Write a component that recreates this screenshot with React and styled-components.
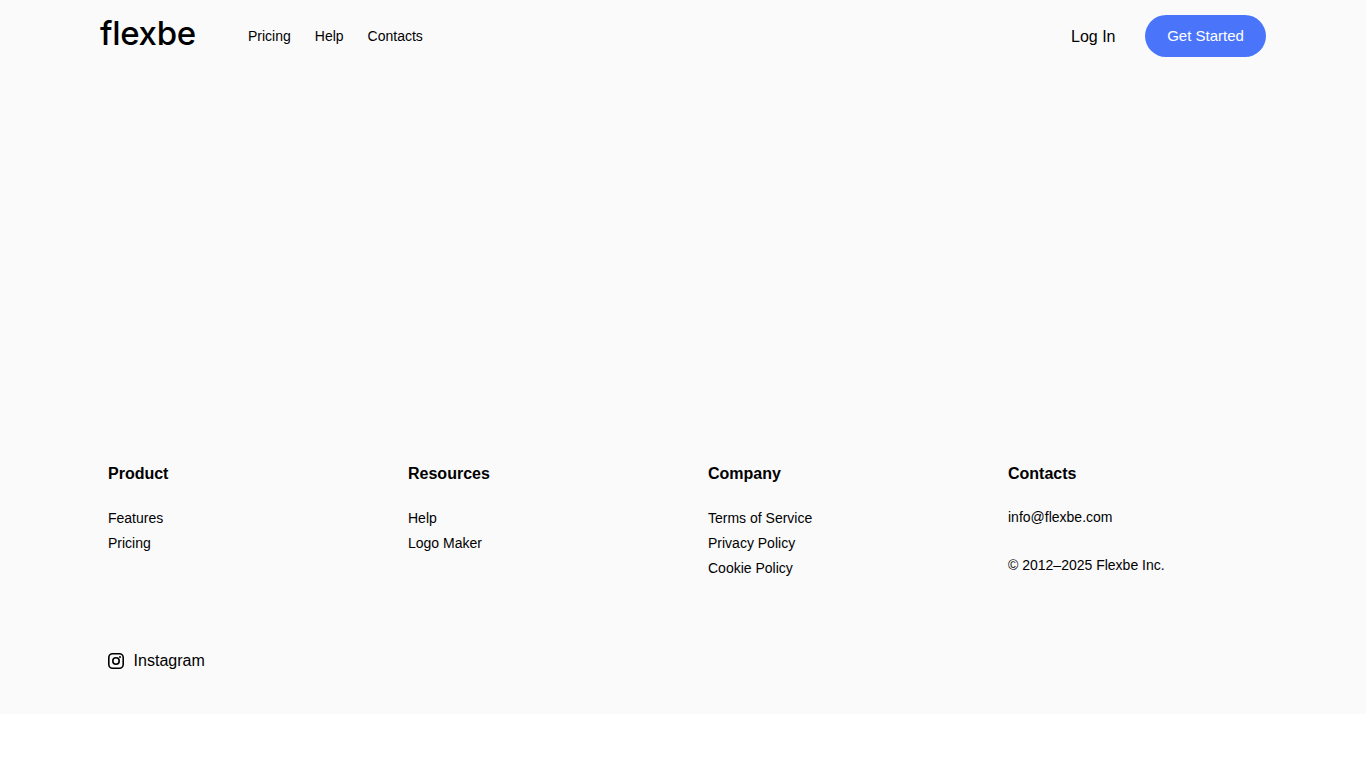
import React from "react";
import styled, { createGlobalStyle } from "styled-components";

const Global = createGlobalStyle`
  html, body { margin: 0; padding: 0; background: #fff; }
  body { font-family: "Liberation Sans", Arial, sans-serif; color: #000; }
  a { color: inherit; text-decoration: none; }
`;

const Page = styled.div`
  height: 714px;
  background: #fafafb;
  display: flex;
  flex-direction: column;
`;

const Header = styled.header`
  height: 72px;
  padding: 0 100px;
  display: flex;
  align-items: center;
`;

const Logo = styled.a`
  width: 148px;
  font-family: "Inter", sans-serif;
  font-size: 33px;
  font-weight: 550;
  line-height: 33px;
  letter-spacing: -0.3px;
  margin-top: -6px;
`;

const Nav = styled.nav`
  display: flex;
  gap: 24px;
  font-size: 14px;
`;

const Actions = styled.div`
  margin-left: auto;
  display: flex;
  align-items: center;
  gap: 29.5px;
`;

const Login = styled.a`
  font-size: 16px;
  margin-top: 1px;
`;

const CTA = styled.a`
  width: 121px;
  height: 42px;
  border-radius: 21px;
  background: #4a75fb;
  color: #fff;
  font-size: 15px;
  display: flex;
  align-items: center;
  justify-content: center;
  margin-top: -1px;
`;

const Main = styled.main`
  flex: 1;
`;

const Footer = styled.footer`
  padding: 0 108px;
  height: 250px;
`;

const Columns = styled.div`
  display: grid;
  grid-template-columns: repeat(4, 300px);
  height: 187px;
`;

const Column = styled.div`
  display: flex;
  flex-direction: column;
  align-items: flex-start;
`;

const Title = styled.h4`
  margin: 0 0 22px;
  font-size: 16px;
  line-height: 20px;
  font-weight: 700;
`;

const LinkItem = styled.a`
  font-size: 14px;
  line-height: 25px;
`;

const ContactText = styled.p`
  margin: 0 0 32px;
  font-size: 14px;
  line-height: 16px;
  &:first-of-type { margin-top: 3px; }
`;

const Social = styled.a`
  display: inline-flex;
  align-items: center;
  gap: 9.6px;
  font-size: 16px;
  line-height: 20px;
`;

const InstaIcon = () => (
  <svg width="16" height="16" viewBox="0 0 16 16" fill="none" stroke="#000" strokeWidth="1.6">
    <rect x="0.8" y="0.8" width="14.4" height="14.4" rx="3.8" />
    <circle cx="8" cy="8" r="3.2" />
    <circle cx="12" cy="4" r="1" fill="#000" stroke="none" />
  </svg>
);

const columns = [
  { title: "Product", links: ["Features", "Pricing"] },
  { title: "Resources", links: ["Help", "Logo Maker"] },
  { title: "Company", links: ["Terms of Service", "Privacy Policy", "Cookie Policy"] },
];

export default function App() {
  return (
    <>
      <Global />
      <Page>
        <Header>
          <Logo href="#">flexbe</Logo>
          <Nav>
            <a href="#">Pricing</a>
            <a href="#">Help</a>
            <a href="#">Contacts</a>
          </Nav>
          <Actions>
            <Login href="#">Log In</Login>
            <CTA href="#">Get Started</CTA>
          </Actions>
        </Header>
        <Main />
        <Footer>
          <Columns>
            {columns.map((c) => (
              <Column key={c.title}>
                <Title>{c.title}</Title>
                {c.links.map((l) => (
                  <LinkItem href="#" key={l}>{l}</LinkItem>
                ))}
              </Column>
            ))}
            <Column>
              <Title>Contacts</Title>
              <ContactText>info@flexbe.com</ContactText>
              <ContactText>© 2012–2025 Flexbe Inc.</ContactText>
            </Column>
          </Columns>
          <Social href="#">
            <InstaIcon />
            Instagram
          </Social>
        </Footer>
      </Page>
    </>
  );
}
